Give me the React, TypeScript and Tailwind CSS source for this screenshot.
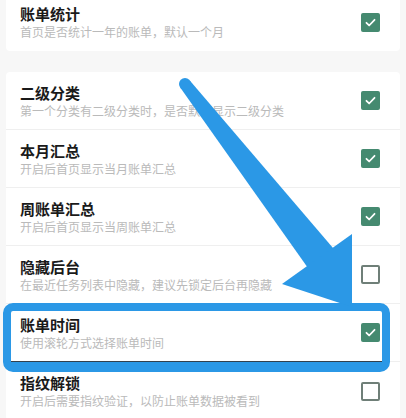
import type React from "react";

type Setting = {
  title: string;
  desc: string;
  checked: boolean;
};

const topGroup: Setting[] = [
  { title: "账单统计", desc: "首页是否统计一年的账单，默认一个月", checked: true },
];

const mainGroup: Setting[] = [
  { title: "二级分类", desc: "第一个分类有二级分类时，是否默认显示二级分类", checked: true },
  { title: "本月汇总", desc: "开启后首页显示当月账单汇总", checked: true },
  { title: "周账单汇总", desc: "开启后首页显示当周账单汇总", checked: true },
  { title: "隐藏后台", desc: "在最近任务列表中隐藏，建议先锁定后台再隐藏", checked: false },
  { title: "账单时间", desc: "使用滚轮方式选择账单时间", checked: true },
  { title: "指纹解锁", desc: "开启后需要指纹验证，以防止账单数据被看到", checked: false },
];

const Checkbox: React.FC<{ checked: boolean }> = ({ checked }) =>
  checked ? (
    <div className="w-[19px] h-[19px] rounded-[2px] bg-[#458a70] flex items-center justify-center">
      <svg width="13" height="13" viewBox="0 0 24 24" fill="none" stroke="#ffffff" strokeWidth="3.2" strokeLinecap="round" strokeLinejoin="round">
        <path d="M4.5 12.5l5 5L19.5 7" />
      </svg>
    </div>
  ) : (
    <div className="w-[19px] h-[19px] rounded-[2px] border-2 border-[#6f7f78] bg-white" />
  );

const Row: React.FC<{ item: Setting; last?: boolean }> = ({ item, last }) => (
  <div className={`flex items-center justify-between h-[58px] pl-[14px] pr-[20px] ${last ? "" : "border-b border-[#efefef]"}`}>
    <div className="flex flex-col">
      <span className="text-[15px] leading-[20px] font-semibold text-[#1a1a1a]">{item.title}</span>
      <span className="text-[12px] leading-[16px] text-[#bababa]">{item.desc}</span>
    </div>
    <Checkbox checked={item.checked} />
  </div>
);

export default function App() {
  return (
    <div
      className="relative w-[406px] h-[418px] overflow-hidden bg-[#f7f7f7]"
      style={{ fontFamily: '"Noto Sans CJK SC", "Noto Sans", sans-serif' }}
    >
      <div className="mt-[-7px] flex flex-col gap-[21px] px-[6px]">
        <div className="bg-white rounded-[4px]">
          {topGroup.map((s, i) => (
            <Row key={i} item={s} last />
          ))}
        </div>
        <div className="bg-white rounded-[4px]">
          {mainGroup.map((s, i) => (
            <Row key={i} item={s} last={i === mainGroup.length - 1} />
          ))}
        </div>
      </div>

      {/* highlight box */}
      <div className="absolute left-[3px] top-[303px] w-[387px] h-[69px] rounded-[10px] border-[8px] border-b-[10px] border-[#2b98e6] shadow-[inset_0_-1px_0_#33414d]" />

      {/* arrow */}
      <svg className="absolute left-0 top-0" width="406" height="418" viewBox="0 0 406 418">
        <polygon
          points="180.2,87.6 189.8,80.4 346.7,263.9 319.3,284.1"
          fill="#2b98e6"
        />
        <circle cx="185" cy="84" r="6" fill="#2b98e6" />
        <polygon points="282,284 352,234 352,307" fill="#2b98e6" />
      </svg>
    </div>
  );
}
